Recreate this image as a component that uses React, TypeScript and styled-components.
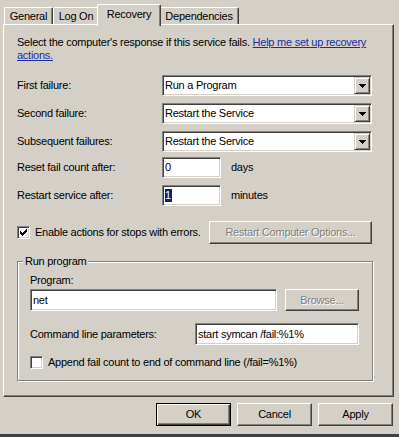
import React from "react";
import styled, { createGlobalStyle, css } from "styled-components";

const Global = createGlobalStyle`
  html, body { margin: 0; padding: 0; background: #d4d0c8; }
  body { font-family: "Liberation Sans", Arial, sans-serif; }
`;

const sunken = css`
  border: 1px solid;
  border-color: #808080 #ffffff #ffffff #808080;
  box-shadow: inset 1px 1px 0 #404040, inset -1px -1px 0 #d4d0c8;
`;

const raised = css`
  border: 1px solid;
  border-color: #ffffff #404040 #404040 #ffffff;
  box-shadow: inset -1px -1px 0 #808080, inset 1px 1px 0 #d4d0c8;
`;

const Window = styled.div`
  width: 399px;
  height: 437px;
  box-sizing: border-box;
  background: #d4d0c8;
  display: flex;
  flex-direction: column;
  overflow: hidden;
  font-family: "Liberation Sans", Arial, sans-serif;
  font-size: 11px;
  letter-spacing: -0.25px;
  line-height: 13px;
  color: #000;
`;

const TabStrip = styled.div`
  display: flex;
  align-items: flex-end;
  height: 24px;
  padding-left: 4px;
  box-sizing: border-box;
  position: relative;
  z-index: 1;
`;

const Tab = styled.div<{ $active?: boolean; $w: number }>`
  box-sizing: border-box;
  width: ${(p) => p.$w}px;
  height: 17px;
  border-left: 1px solid #fff;
  border-top: 1px solid #fff;
  border-right: 1px solid #404040;
  box-shadow: inset -1px 0 0 #808080;
  border-radius: 2px 2px 0 0;
  display: flex;
  align-items: center;
  justify-content: center;
  background: #d4d0c8;
  ${(p) =>
    p.$active &&
    css`
      width: ${p.$w + 4}px;
      height: 22px;
      margin: 0 -2px -2px;
      padding-bottom: 3px;
      position: relative;
    `}
`;

const Panel = styled.div`
  box-sizing: border-box;
  margin-left: 3px;
  width: 391px;
  height: 373px;
  border: 1px solid;
  border-color: #fff #404040 #404040 #fff;
  box-shadow: inset -1px -1px 0 #808080;
  padding: 11px 21px 0 13px;
  display: flex;
  flex-direction: column;
`;

const Description = styled.p`
  margin: 0;
  line-height: 13px;
`;

const Link = styled.a`
  color: #1a2ea6;
  text-decoration: underline;
  cursor: pointer;
`;

const FieldGrid = styled.div<{ $mt: number }>`
  display: grid;
  grid-template-columns: 145px 1fr;
  grid-auto-rows: 21px;
  row-gap: 7px;
  align-items: center;
  margin-top: ${(p) => p.$mt}px;
`;

const Combo = styled.div`
  ${sunken};
  box-sizing: border-box;
  width: 210px;
  height: 21px;
  background: #fff;
  padding: 1px;
  display: flex;
`;

const ComboText = styled.span`
  flex: 1;
  padding-left: 1px;
  display: flex;
  align-items: center;
  white-space: nowrap;
`;

const ArrowButton = styled.span`
  box-sizing: border-box;
  width: 16px;
  height: 17px;
  background: #d4d0c8;
  border: 1px solid;
  border-color: #d4d0c8 #404040 #404040 #d4d0c8;
  box-shadow: inset 1px 1px 0 #fff, inset -1px -1px 0 #808080;
  display: flex;
  align-items: center;
  justify-content: center;
`;

const InlineRow = styled.div<{ $gap?: number }>`
  display: flex;
  align-items: center;
  gap: ${(p) => p.$gap ?? 10}px;
`;

const Edit = styled.div<{ $w: number; $h?: number }>`
  ${sunken};
  box-sizing: border-box;
  width: ${(p) => p.$w}px;
  height: ${(p) => p.$h ?? 21}px;
  background: #fff;
  padding: 0 2px;
  display: flex;
  align-items: center;
  white-space: nowrap;
  flex: none;
`;

const Selected = styled.span`
  background: #0a246a;
  color: #fff;
  padding: 0 1px 0 0;
  line-height: 13px;
`;

const CheckRow = styled.div<{ $mt: number; $h?: number }>`
  display: flex;
  align-items: center;
  margin-top: ${(p) => p.$mt}px;
  height: ${(p) => p.$h ?? 23}px;
`;

const CheckBox = styled.span`
  ${sunken};
  box-sizing: border-box;
  width: 13px;
  height: 13px;
  background: #fff;
  flex: none;
  display: flex;
  align-items: center;
  justify-content: center;
`;

const CheckLabel = styled.span`
  margin-left: 5px;
  white-space: nowrap;
`;

const Button = styled.div<{ $w: number; $h?: number; $disabled?: boolean; $default?: boolean }>`
  ${raised};
  box-sizing: border-box;
  width: ${(p) => p.$w}px;
  height: ${(p) => p.$h ?? 23}px;
  background: #d4d0c8;
  display: flex;
  align-items: center;
  justify-content: center;
  white-space: nowrap;
  flex: none;
  ${(p) =>
    p.$disabled &&
    css`
      color: #808080;
      text-shadow: 1px 1px 0 #fff;
    `}
  ${(p) =>
    p.$default &&
    css`
      border: 1px solid #000;
      box-shadow: inset 1px 1px 0 #fff, inset -1px -1px 0 #404040,
        inset -2px -2px 0 #808080;
    `}
`;

const PushRight = styled.div`
  margin-left: auto;
`;

const Group = styled.fieldset`
  box-sizing: border-box;
  width: 356px;
  margin: 11px 0 0 0;
  padding: 0 13px 11px 12px;
  border: 1px solid #808080;
  box-shadow: inset 1px 1px 0 #fff, 1px 1px 0 #fff;
  min-width: 0;
`;

const Legend = styled.legend`
  margin-left: -7px;
  padding: 0 2px;
  line-height: 13px;
  background: #d4d0c8;
`;

const FieldLabel = styled.div`
  margin-top: 6px;
  line-height: 13px;
`;

const ProgramRow = styled.div`
  display: flex;
  align-items: center;
  justify-content: space-between;
  margin-top: 2px;
`;

const ParamRow = styled.div`
  display: flex;
  align-items: center;
  justify-content: space-between;
  margin-top: 12px;
`;

const Footer = styled.div`
  display: flex;
  justify-content: flex-end;
  gap: 6px;
  margin-top: 6px;
  padding-right: 6px;
`;

const BottomEdge = styled.div`
  margin-top: auto;
  height: 3px;
  background: #404040;
`;

const Arrow = () => (
  <svg width="7" height="4" viewBox="0 0 7 4" shapeRendering="crispEdges">
    <path d="M0 0h7v1H0zM1 1h5v1H1zM2 2h3v1H2zM3 3h1v1H3z" fill="#000" />
  </svg>
);

const Check = () => (
  <svg width="7" height="7" viewBox="0 0 7 7" shapeRendering="crispEdges">
    <path
      d="M6 0h1v1H6zM5 1h2v1H5zM0 2h1v1H0zM4 2h3v1H4zM0 3h2v1H0zM3 3h3v1H3zM0 4h5v1H0zM1 5h3v1H1zM2 6h1v1H2z"
      fill="#000"
    />
  </svg>
);

const ComboBox = ({ value }: { value: string }) => (
  <Combo>
    <ComboText>{value}</ComboText>
    <ArrowButton>
      <Arrow />
    </ArrowButton>
  </Combo>
);

export default function App() {
  return (
    <>
      <Global />
      <Window>
        <TabStrip>
          <Tab $w={49}>General</Tab>
          <Tab $w={46}>Log On</Tab>
          <Tab $w={60} $active>
            Recovery
          </Tab>
          <Tab $w={80}>Dependencies</Tab>
        </TabStrip>
        <Panel>
          <Description>
            Select the computer's response if this service fails.{" "}
            <Link>
              Help me set up recovery
              <br />
              actions.
            </Link>
          </Description>

          <FieldGrid $mt={13}>
            <span>First failure:</span>
            <ComboBox value="Run a Program" />
            <span>Second failure:</span>
            <ComboBox value="Restart the Service" />
            <span>Subsequent failures:</span>
            <ComboBox value="Restart the Service" />
          </FieldGrid>

          <FieldGrid $mt={5}>
            <span>Reset fail count after:</span>
            <InlineRow>
              <Edit $w={59}>0</Edit>
              <span>days</span>
            </InlineRow>
            <span>Restart service after:</span>
            <InlineRow>
              <Edit $w={59}>
                <Selected>1</Selected>
              </Edit>
              <span>minutes</span>
            </InlineRow>
          </FieldGrid>

          <CheckRow $mt={15}>
            <CheckBox>
              <Check />
            </CheckBox>
            <CheckLabel>Enable actions for stops with errors.</CheckLabel>
            <PushRight>
              <Button $w={163} $disabled>
                Restart Computer Options...
              </Button>
            </PushRight>
          </CheckRow>

          <Group>
            <Legend>Run program</Legend>
            <FieldLabel>Program:</FieldLabel>
            <ProgramRow>
              <Edit $w={247} $h={22}>
                net
              </Edit>
              <Button $w={74} $h={22} $disabled>
                Browse...
              </Button>
            </ProgramRow>
            <ParamRow>
              <span>Command line parameters:</span>
              <Edit $w={164} $h={22}>
                start symcan /fail:%1%
              </Edit>
            </ParamRow>
            <CheckRow $mt={11} $h={13}>
              <CheckBox />
              <CheckLabel>Append fail count to end of command line (/fail=%1%)</CheckLabel>
            </CheckRow>
          </Group>
        </Panel>
        <Footer>
          <Button $w={75} $default>
            OK
          </Button>
          <Button $w={75}>Cancel</Button>
          <Button $w={75}>Apply</Button>
        </Footer>
        <BottomEdge />
      </Window>
    </>
  );
}
